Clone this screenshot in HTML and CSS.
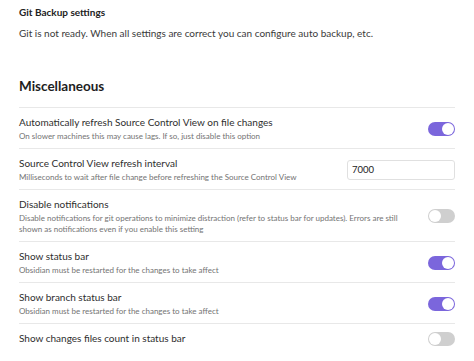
FILE: index.html
```html
<!DOCTYPE html>
<html lang="en">
<head>
    <meta charset="UTF-8">
    <title>Settings</title>
    <link rel="stylesheet" href="styles.css">
</head>
<body>
    <div class="settings">
        <div class="section-top">
            <div class="sub-heading">Git Backup settings</div>
            <p class="notice">Git is not ready. When all settings are correct you can configure auto backup, etc.</p>
        </div>

        <h2 class="heading">Miscellaneous</h2>

        <div class="item">
            <div class="info">
                <div class="name">Automatically refresh Source Control View on file changes</div>
                <div class="desc">On slower machines this may cause lags. If so, just disable this option</div>
            </div>
            <div class="toggle on"></div>
        </div>

        <div class="item">
            <div class="info">
                <div class="name">Source Control View refresh interval</div>
                <div class="desc">Milliseconds to wait after file change before refreshing the Source Control View</div>
            </div>
            <input class="text-input" type="text" value="7000">
        </div>

        <div class="item">
            <div class="info">
                <div class="name">Disable notifications</div>
                <div class="desc">Disable notifications for git operations to minimize distraction (refer to status bar for updates). Errors are still shown as notifications even if you enable this setting</div>
            </div>
            <div class="toggle"></div>
        </div>

        <div class="item">
            <div class="info">
                <div class="name">Show status bar</div>
                <div class="desc">Obsidian must be restarted for the changes to take affect</div>
            </div>
            <div class="toggle on"></div>
        </div>

        <div class="item">
            <div class="info">
                <div class="name">Show branch status bar</div>
                <div class="desc">Obsidian must be restarted for the changes to take affect</div>
            </div>
            <div class="toggle on"></div>
        </div>

        <div class="item">
            <div class="info">
                <div class="name">Show changes files count in status bar</div>
            </div>
            <div class="toggle"></div>
        </div>
    </div>
</body>
</html>
```

FILE: styles.css
```css
body {
    font-family: 'Lato', sans-serif;
    margin: 0;
    padding: 0;
    background-color: #fff;
    color: #222;
    overflow: hidden;
}

.settings {
    width: 436px;
    margin-left: 19px;
    padding-top: 5px;
}

.sub-heading {
    font-size: 10px;
    font-weight: 700;
    line-height: 14px;
    color: #222;
}

.notice {
    margin: 7px 0 0;
    font-size: 10px;
    line-height: 14px;
    color: #3a3a3a;
}

.heading {
    margin: 36px 0 11px;
    font-size: 13.5px;
    font-weight: 700;
    line-height: 20px;
    color: #1e1e1e;
}

.item {
    display: flex;
    align-items: center;
    justify-content: space-between;
    gap: 30px;
    border-top: 1px solid #e8e8e8;
    padding: 7px 0 6px;
}

.info {
    flex: 1;
}

.name {
    font-size: 10px;
    line-height: 15px;
    color: #2e2e2e;
}

.desc {
    margin-top: 1px;
    font-size: 8px;
    line-height: 11px;
    color: #737373;
}

.toggle {
    position: relative;
    flex: none;
    width: 27px;
    height: 14px;
    border-radius: 7px;
    background-color: #cfcfcf;
}

.toggle::after {
    content: '';
    position: absolute;
    top: 1px;
    left: 1px;
    width: 12px;
    height: 12px;
    border-radius: 50%;
    background-color: #fff;
}

.toggle.on {
    background-color: #7b66dc;
}

.toggle.on::after {
    left: 14px;
}

.text-input {
    flex: none;
    width: 108px;
    height: 20px;
    box-sizing: border-box;
    padding: 0 4px;
    border: 1px solid #e0e0e0;
    border-radius: 3px;
    font-family: inherit;
    font-size: 9.5px;
    color: #222;
}
```
